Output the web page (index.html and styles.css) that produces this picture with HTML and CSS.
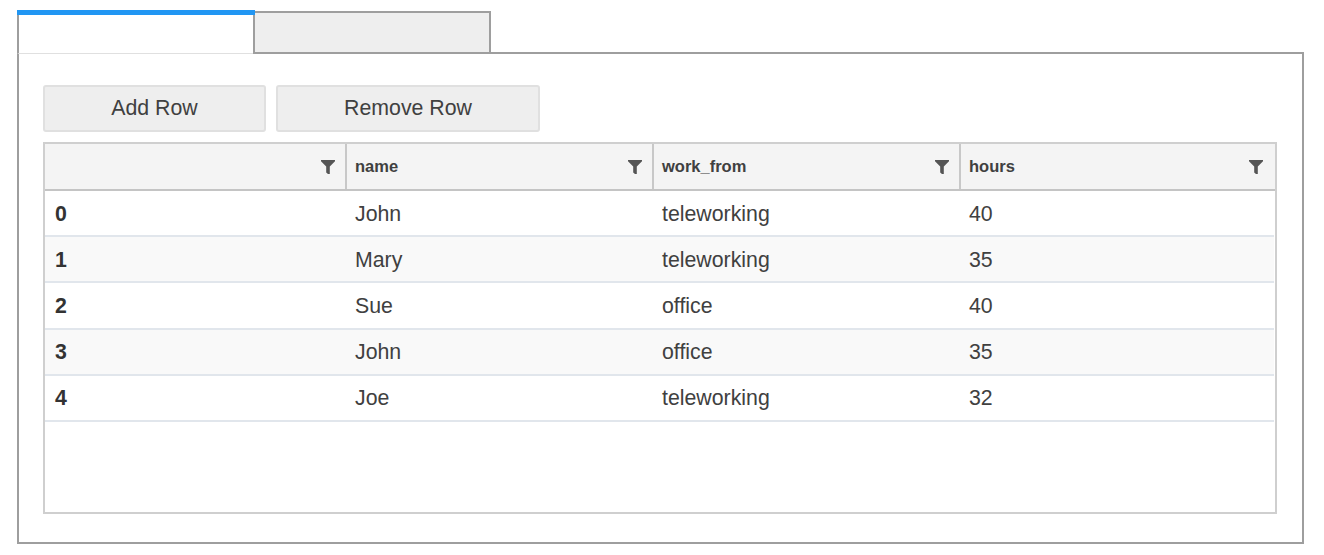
FILE: index.html
```html
<!DOCTYPE html>
<html lang="en">
<head>
<meta charset="utf-8">
<title>Table</title>
<link rel="stylesheet" href="styles.css">
</head>
<body>
<svg class="defs" width="0" height="0" aria-hidden="true"><defs><symbol id="funnel" viewBox="0 0 14 14"><path d="M0 0H14V1.2L8.8 6.6V14H7L5.2 12.4V6.6L0 1.2Z"/></symbol></defs></svg>
<div class="widget">
  <div class="tabs">
    <div class="tab tab-active"></div>
    <div class="tab tab-idle"></div>
    <div class="tab-fill"></div>
  </div>
  <div class="panel">
    <div class="toolbar">
      <button class="btn btn-add">Add Row</button>
      <button class="btn btn-remove">Remove Row</button>
    </div>
    <div class="grid">
      <div class="row head">
        <div class="cell c0"><svg class="filter"><use href="#funnel"/></svg></div>
        <div class="cell c1"><span>name</span><svg class="filter"><use href="#funnel"/></svg></div>
        <div class="cell c2"><span>work_from</span><svg class="filter"><use href="#funnel"/></svg></div>
        <div class="cell c3"><span>hours</span><svg class="filter"><use href="#funnel"/></svg></div>
      </div>
      <div class="row"><div class="cell c0 idx">0</div><div class="cell c1">John</div><div class="cell c2">teleworking</div><div class="cell c3">40</div></div>
      <div class="row alt"><div class="cell c0 idx">1</div><div class="cell c1">Mary</div><div class="cell c2">teleworking</div><div class="cell c3">35</div></div>
      <div class="row"><div class="cell c0 idx">2</div><div class="cell c1">Sue</div><div class="cell c2">office</div><div class="cell c3">40</div></div>
      <div class="row alt"><div class="cell c0 idx">3</div><div class="cell c1">John</div><div class="cell c2">office</div><div class="cell c3">35</div></div>
      <div class="row"><div class="cell c0 idx">4</div><div class="cell c1">Joe</div><div class="cell c2">teleworking</div><div class="cell c3">32</div></div>
    </div>
  </div>
</div>
</body>
</html>
```
FILE: styles.css
```css
* { box-sizing: border-box; }
html, body { margin: 0; padding: 0; background: #fff; }
body { font-family: "Liberation Sans", Arial, sans-serif; color: #404040; }
.defs { display: block; height: 0; }
.widget { width: 1287px; margin: 10px 0 0 17px; display: flex; flex-direction: column; }
.tabs { display: flex; height: 44px; }
.tab-active { position: relative; width: 236px; border-left: 2px solid #9e9e9e; border-bottom: 1px solid #e0e0e0; background: #fff; }
.tab-active::before { content: ""; position: absolute; top: 0; left: -2px; width: 238px; height: 5px; background: #2196f3; z-index: 1; }
.tab-idle { width: 238px; margin-top: 1px; border: 2px solid #9e9e9e; background: #eee; }
.tab-fill { flex: 1; border-bottom: 2px solid #9e9e9e; }
.panel { height: 490px; border: 2px solid #9e9e9e; border-top: 0; padding: 31px 25px 28px 24px; display: flex; flex-direction: column; }
.toolbar { display: flex; gap: 10px; margin-bottom: 10px; }
.btn { height: 47px; padding: 0; font: 21.3px/1 "Liberation Sans", Arial, sans-serif; color: #404040; background: #eee; border: 2px solid #e0e0e0; border-radius: 3px; }
.btn-add { width: 223px; }
.btn-remove { width: 264px; }
.grid { flex: 1; border: 2px solid #cfcfcf; }
.row { display: flex; height: 46.2px; margin-right: 1px; border-bottom: 2px solid #e1e6ec; font-size: 21.3px; align-items: stretch; }
.alt { background: #f9f9f9; }
.head { height: 47px; margin-right: 0; background: #f4f4f4; border-bottom: 2px solid #c4c4c4; font-size: 16.5px; font-weight: 700; }
.cell { display: flex; align-items: center; justify-content: space-between; padding: 2px 8px 0 9px; }
.c0 { width: 301px; padding-left: 10px; }
.c1 { width: 307px; }
.c2 { width: 307px; }
.c3 { flex: 1; }
.head .cell { padding: 0 10px 0 8px; }
.head .c0 { width: 302px; border-right: 2px solid #c8c8c8; justify-content: flex-end; }
.head .c1 { width: 307px; border-right: 2px solid #c8c8c8; }
.head .c2 { width: 307px; border-right: 2px solid #c8c8c8; }
.head .c3 { padding-right: 12px; }
.idx { font-weight: 700; color: #333; }
.filter { width: 14px; height: 14px; fill: #555; flex: none; }
```
